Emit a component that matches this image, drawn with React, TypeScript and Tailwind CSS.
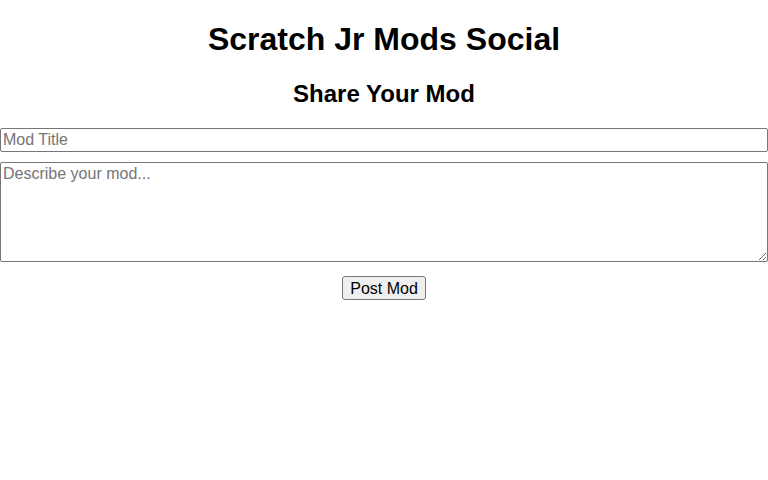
import React from 'react';

const App: React.FC = () => {
  return (
    <div className="min-h-[480px] bg-white text-center text-black font-['Liberation_Sans',Arial,sans-serif]">
      <h1 className="pt-[21px] text-[32px] leading-[37px] font-bold">Scratch Jr Mods Social</h1>
      <h2 className="mt-[22px] text-[24px] leading-[28px] font-bold">Share Your Mod</h2>
      <form className="mt-[20px] flex flex-col items-center" onSubmit={(e) => e.preventDefault()}>
        <input
          type="text"
          placeholder="Mod Title"
          className="block w-full h-[24px] border border-[#767676] rounded-[2px] px-[2px] text-[16px] text-left placeholder:text-[#757575] outline-none"
        />
        <textarea
          placeholder="Describe your mod..."
          className="block w-full h-[100px] mt-[10px] border border-[#767676] rounded-[2px] px-[2px] py-[2px] text-[16px] leading-[18px] text-left placeholder:text-[#757575] outline-none"
        />
        <button
          type="submit"
          className="mt-[14px] h-[24px] w-[84px] bg-[#efefef] border border-[#767676] rounded-[3px] text-[16px] text-black"
        >
          Post Mod
        </button>
      </form>
    </div>
  );
};

export default App;
